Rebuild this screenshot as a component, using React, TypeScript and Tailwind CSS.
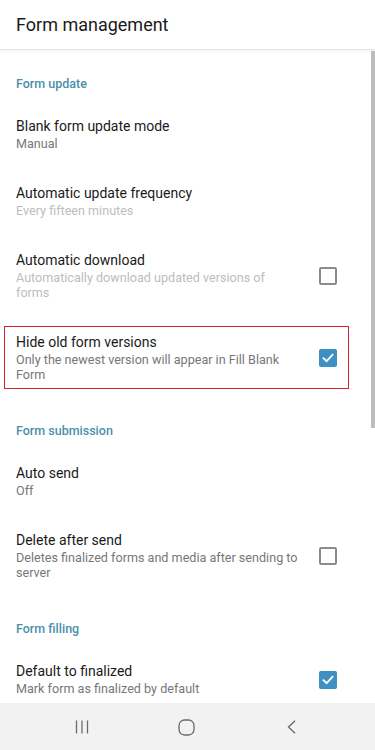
import React from "react";

const font = { fontFamily: "Roboto, 'Noto Sans', sans-serif" };

function Check({ checked }: { checked: boolean }) {
  if (checked) {
    return (
      <div className="w-[18px] h-[18px] rounded-[2px] bg-[#3f8fc3] flex items-center justify-center">
        <svg width="14" height="14" viewBox="0 0 14 14" fill="none">
          <path d="M2.5 7.2 L5.6 10.2 L11.5 3.8" stroke="white" strokeWidth="1.8" strokeLinecap="square" />
        </svg>
      </div>
    );
  }
  return <div className="w-[18px] h-[18px] rounded-[2px] border-2 border-[#8a8a8a]" />;
}

function Section({ title }: { title: string }) {
  return (
    <div className="pl-4 pt-[25px] pb-[8px] text-[12.5px] leading-[16px] font-medium text-[#4a90ab]">{title}</div>
  );
}

function Item({
  title,
  summary,
  disabledSummary,
  checkbox,
  highlight,
}: {
  title: string;
  summary: string;
  disabledSummary?: boolean;
  checkbox?: boolean | null;
  highlight?: boolean;
}) {
  return (
    <div className="relative flex items-center pl-4 py-4">
      <div className="w-[282px]">
        <div className="text-[14px] leading-[20px] text-[#1a1a1a]">{title}</div>
        <div className={`text-[12.6px] leading-[15px] ${disabledSummary ? "text-[#bdbdbd]" : "text-[#777777]"}`}>
          {summary}
        </div>
      </div>
      {checkbox !== undefined && checkbox !== null && (
        <div className="ml-[21px] mt-[2px]">
          <Check checked={checkbox} />
        </div>
      )}
      {highlight && (
        <div className="absolute left-[4px] right-[26px] top-[10px] bottom-[9px] border-[1.5px] border-[#d3222a]" />
      )}
    </div>
  );
}

export default function App() {
  return (
    <div style={font} className="relative w-[375px] h-[750px] bg-white overflow-hidden flex flex-col">
      <div className="h-[50px] shrink-0 flex items-center pl-4 border-b border-[#e4e4e4] shadow-[0_1px_2px_rgba(0,0,0,0.06)]">
        <span className="text-[18px] text-[#1a1a1a] leading-none">Form management</span>
      </div>
      <div className="flex-1 overflow-hidden pt-[1px]">
        <Section title="Form update" />
        <Item title="Blank form update mode" summary="Manual" />
        <Item title="Automatic update frequency" summary="Every fifteen minutes" disabledSummary />
        <Item
          title="Automatic download"
          summary="Automatically download updated versions of forms"
          disabledSummary
          checkbox={false}
        />
        <Item
          title="Hide old form versions"
          summary="Only the newest version will appear in Fill Blank Form"
          checkbox={true}
          highlight
        />
        <Section title="Form submission" />
        <Item title="Auto send" summary="Off" />
        <Item
          title="Delete after send"
          summary="Deletes finalized forms and media after sending to server"
          checkbox={false}
        />
        <Section title="Form filling" />
        <Item title="Default to finalized" summary="Mark form as finalized by default" checkbox={true} />
      </div>
      <div className="h-[47px] shrink-0 bg-[#f2f2f2] flex items-center pl-[75px] pt-[1px]">
        <svg width="14" height="14" viewBox="0 0 14 14">
          <path d="M1.5 0.5 V13.5 M7 0.5 V13.5 M12.5 0.5 V13.5" stroke="#6a6a6a" strokeWidth="1.3" />
        </svg>
        <svg width="17" height="17" viewBox="0 0 17 17" className="ml-[89px]">
          <rect x="1" y="1" width="15" height="15" rx="5.5" fill="none" stroke="#6a6a6a" strokeWidth="1.3" />
        </svg>
        <svg width="9" height="14" viewBox="0 0 9 14" className="ml-[92px]">
          <path d="M8 0.8 L1.5 7 L8 13.2" fill="none" stroke="#6a6a6a" strokeWidth="1.3" />
        </svg>
      </div>
      <div className="absolute left-[371px] top-[51px] w-[4px] h-[377px] bg-[#bdbdbd]" />
    </div>
  );
}
